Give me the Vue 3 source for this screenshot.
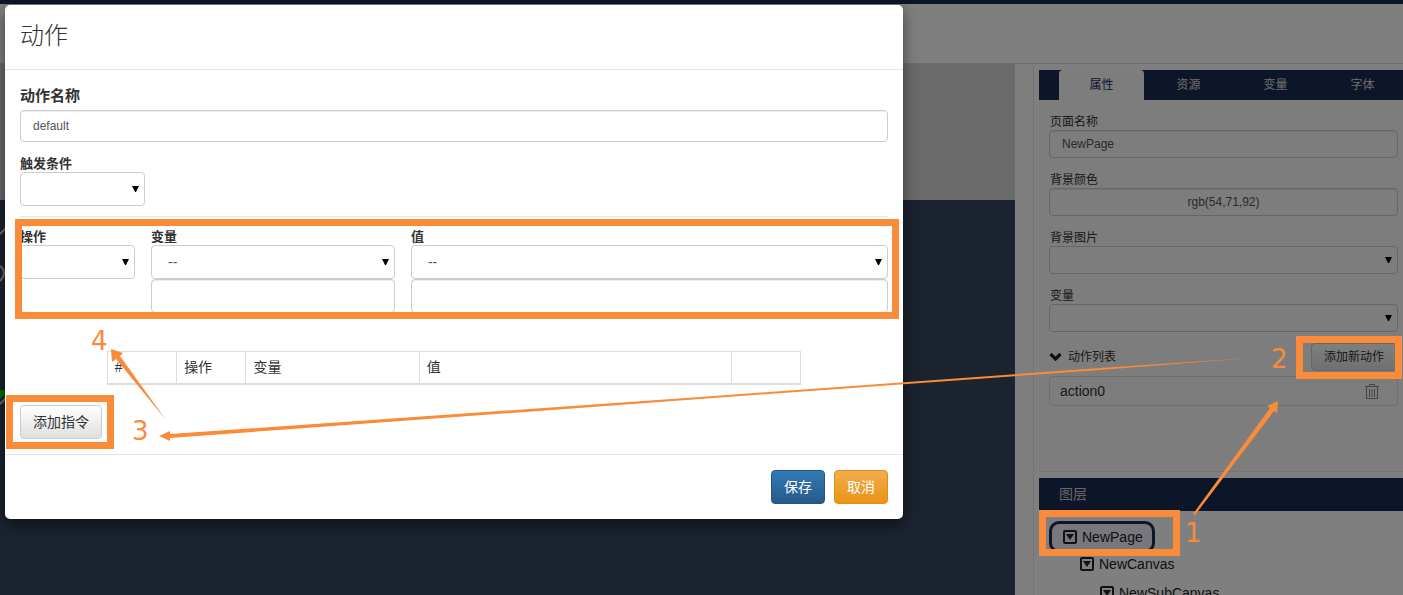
<script setup>
import { ref } from 'vue'

const tabs = ['属性', '资源', '变量', '字体']
const activeTab = ref('属性')
const actionName = ref('default')
const pageName = ref('NewPage')
const background = ref('rgb(54,71,92)')
const layers = [
  { name: 'NewPage', level: 0, selected: true },
  { name: 'NewCanvas', level: 1 },
  { name: 'NewSubCanvas', level: 2 },
]
</script>

<template>
  <div class="app">
    <header class="navbar"></header>
    <div class="toolbar"></div>
    <div class="workspace">
      <main class="stage">
        <div class="stage-canvas">
          <svg class="stage-art" width="6" height="220" viewBox="0 0 6 220" fill="none">
            <path d="M0 34 L6 28 M0 66 C3 68 4 70 4 73 C4 76 3 78 0 81 M0 204 L6 198" stroke="#ddd" stroke-width="2" />
            <path d="M0 190h5v5l-5 4z" fill="#00e000" />
          </svg>
        </div>
      </main>
      <aside class="sidebar">
        <section class="panel properties">
          <nav class="tabs">
            <button v-for="t in tabs" :key="t" type="button" class="tab" :class="{ active: t === activeTab }" @click="activeTab = t">{{ t }}</button>
          </nav>
          <div class="panel-body">
            <div class="prop">
              <label for="page-name">页面名称</label>
              <input id="page-name" v-model="pageName" type="text" class="control small">
            </div>
            <div class="prop">
              <label for="bg-color">背景颜色</label>
              <input id="bg-color" v-model="background" type="text" class="control small centered">
            </div>
            <div class="prop">
              <label for="bg-image">背景图片</label>
              <div class="select small">
                <select id="bg-image" class="control small"><option></option></select>
                <svg class="caret" width="7" height="6" viewBox="0 0 7 6"><path d="M0 0h7L4 6H3z" /></svg>
              </div>
            </div>
            <div class="prop">
              <label for="page-var">变量</label>
              <div class="select small">
                <select id="page-var" class="control small"><option></option></select>
                <svg class="caret" width="7" height="6" viewBox="0 0 7 6"><path d="M0 0h7L4 6H3z" /></svg>
              </div>
            </div>
            <div class="actions-head">
              <svg width="13" height="10" viewBox="0 0 13 10"><path d="M1.5 2 L6.5 7 L11.5 2" fill="none" stroke="#222" stroke-width="3.2" /></svg>
              <span>动作列表</span>
              <button type="button" class="btn btn-small">添加新动作</button>
            </div>
            <div class="action-item">
              <span>action0</span>
              <button type="button" class="trash" aria-label="Delete">
                <svg width="14" height="17" viewBox="0 0 14 17" fill="none" stroke="#888" stroke-width="1"><path d="M0 3.5h14M4.5 3V1.5h5V3M1.5 4v11.500h11V4M4.500 6v8M7 6v8M9.500 6v8" /></svg>
              </button>
            </div>
          </div>
        </section>
        <section class="panel layers">
          <h2>图层</h2>
          <ul class="tree">
            <li v-for="l in layers" :key="l.name" :class="['level-' + l.level, { selected: l.selected }]">
              <svg width="14" height="14" viewBox="0 0 14 14"><rect x="1" y="1" width="12" height="12" rx="1" fill="none" stroke="currentColor" stroke-width="2" /><path d="M3 4h8L7 10z" fill="currentColor" /></svg>
              <span>{{ l.name }}</span>
            </li>
          </ul>
        </section>
      </aside>
    </div>

    <div class="backdrop"></div>

    <div class="modal" role="dialog" aria-labelledby="modal-title">
      <div class="modal-header"><h1 id="modal-title">动作</h1></div>
      <div class="modal-body">
        <label class="name-label" for="action-name">动作名称</label>
        <input id="action-name" v-model="actionName" type="text" class="control name-input">
        <label class="field-label" for="trigger">触发条件</label>
        <div class="select trigger">
          <select id="trigger" class="control"><option></option></select>
          <svg class="caret" width="7" height="6" viewBox="0 0 7 6"><path d="M0 0h7L4 6H3z" /></svg>
        </div>
        <hr>
        <div class="command">
          <div>
            <label class="field-label" for="op">操作</label>
            <div class="select">
              <select id="op" class="control"><option></option></select>
              <svg class="caret" width="7" height="6" viewBox="0 0 7 6"><path d="M0 0h7L4 6H3z" /></svg>
            </div>
          </div>
          <div>
            <label class="field-label" for="var">变量</label>
            <div class="select">
              <select id="var" class="control"><option>--</option></select>
              <svg class="caret" width="7" height="6" viewBox="0 0 7 6"><path d="M0 0h7L4 6H3z" /></svg>
            </div>
            <input type="text" class="control" aria-label="变量">
          </div>
          <div>
            <label class="field-label" for="val">值</label>
            <div class="select">
              <select id="val" class="control"><option>--</option></select>
              <svg class="caret" width="7" height="6" viewBox="0 0 7 6"><path d="M0 0h7L4 6H3z" /></svg>
            </div>
            <input type="text" class="control" aria-label="值">
          </div>
        </div>
        <table>
          <thead>
            <tr><th class="narrow">#</th><th class="narrow">操作</th><th class="mid">变量</th><th>值</th><th class="narrow"></th></tr>
          </thead>
        </table>
        <button type="button" class="btn">添加指令</button>
      </div>
      <div class="modal-footer">
        <button type="button" class="btn primary">保存</button>
        <button type="button" class="btn warning">取消</button>
      </div>
    </div>

    <div class="mark mark-command"></div>
    <div class="mark mark-add"></div>
    <div class="mark mark-action"></div>
    <div class="mark mark-page"></div>
    <svg class="arrows" width="1403" height="595" viewBox="0 0 1403 595">
      <path d="M159 436 L170 431 L170 434 L700 397 L1100 368 L1250 358 L1100 370 L700 399 L170 438 L170 441z" />
      <path d="M111 349 L123 353 L120 356 L166 420 L116 359 L112 362z" />
      <path d="M1278 401 L1277 413 L1274 411 L1195 515 L1193 514 L1270 408 L1267 406z" />
      <text x="1185" y="542">1</text>
      <text x="1271" y="368">2</text>
      <text x="132" y="440">3</text>
      <text x="91" y="350">4</text>
    </svg>
  </div>
</template>

<style>
body { margin: 0; overflow: hidden; }
</style>

<style scoped>
* { box-sizing: border-box; }
.app {
  position: relative;
  display: flex;
  flex-direction: column;
  height: 100vh;
  overflow: hidden;
  background: #fff;
  color: #333;
  font: 14px/20px "Liberation Sans", "Noto Sans CJK SC", sans-serif;
}
.navbar { flex: none; height: 4px; background: #1a2a50; }
.toolbar { flex: none; height: 60px; border-bottom: 1px solid #ddd; }
.workspace { flex: 1; min-height: 0; display: flex; gap: 18px; }
.stage { flex: 1; min-width: 0; display: flex; padding-top: 136px; background: #d6d6d6; }
.stage-canvas { flex: 1; background: #36475c; }
.stage-art { display: block; }
.sidebar { flex: none; width: 370px; display: flex; flex-direction: column; border-left: 1px solid #e6e6e6; padding-left: 5px; }
.properties { flex: none; height: 408px; padding-top: 6px; border-bottom: 1px solid #e6e6e6; }
.tabs { display: flex; height: 30px; padding-left: 20px; background: #1a2a50; }
.tab { flex: none; width: 87px; padding: 0 2px 0 0; border: 0; background: none; color: #ddd; font: inherit; font-size: 12px; }
.tab.active { width: 85px; margin-right: 2px; padding: 0; border-radius: 4px 4px 0 0; background: #fafafa; color: #1a2a50; }
.panel-body { height: 371px; padding: 10px 5px 0 10px; background: #fafafa; }
.prop { height: 58px; }
.prop label { display: block; height: 20px; padding-left: 1px; font-size: 12px; line-height: 24px; }

.control {
  display: block;
  width: 100%;
  height: 34px;
  margin: 0;
  padding: 0 12px;
  border: 1px solid #ccc;
  border-radius: 4px;
  background: #fff;
  color: #555;
  font: inherit;
  font-size: 12px;
  box-shadow: inset 0 1px 1px rgba(0, 0, 0, .075);
}
select.control { appearance: none; padding-left: 16px; font-size: 14px; box-shadow: none; }
.control.small { height: 28px; background: transparent; font-size: 12px; }
.centered { text-align: center; }
.select { position: relative; }
.caret { position: absolute; right: 6px; top: 14px; fill: #000; pointer-events: none; }
.select.small .caret { top: 11px; }

.actions-head { display: flex; align-items: center; height: 30px; font-size: 12px; }
.actions-head span { flex: 1; padding-left: 6px; }
.btn {
  height: 34px;
  padding: 0 12px;
  border: 1px solid #ccc;
  border-radius: 4px;
  background: linear-gradient(#fff, #e0e0e0);
  color: #333;
  font: inherit;
}
.btn-small { height: 28px; margin-right: 1px; font-size: 12px; }
.action-item { display: flex; align-items: center; justify-content: space-between; height: 30px; margin-top: 4px; padding: 0 18px 0 10px; border: 1px solid #ddd; border-radius: 4px; }
.trash { display: flex; padding: 0; border: 0; background: none; }

.layers { margin-top: 6px; }
.layers h2 { height: 33px; margin: 0; padding-left: 20px; background: #1a2a50; color: #ccc; font-size: 14px; font-weight: 400; line-height: 32px; }
.tree { margin: 0; padding: 10px 0 0 10px; list-style: none; color: #222; }
.tree li { display: flex; align-items: center; gap: 5px; width: max-content; height: 29px; }
.tree li.level-0 { height: 32px; padding: 0 9px 0 11px; }
.tree li.level-1 { margin-left: 31px; height: 22px; }
.tree li.level-2 { margin-left: 51px; height: 36px; }
.tree li.selected { border: 3px solid #1a2a50; border-radius: 10px; background: #eeeefa; }

.backdrop { position: absolute; inset: 0; background: rgba(0, 0, 0, .5); }
.modal {
  position: absolute;
  left: 5px;
  top: 5px;
  width: 64%;
  border-radius: 5px;
  background: #fff;
  box-shadow: 0 5px 15px rgba(0, 0, 0, .5);
}
.modal-header { padding: 16px 15px 18px; border-bottom: 1px solid #e5e5e5; }
.modal-header h1 { margin: 0; font-size: 24px; font-weight: 300; line-height: 30px; }
.modal-body { padding: 15px; }
.name-label { display: block; height: 25px; font-size: 15px; font-weight: 700; line-height: 22px; }
.name-input { height: 32px; margin-bottom: 12px; }
.field-label { display: block; height: 18px; font-size: 13px; font-weight: 700; }
.trigger { width: 125px; }
hr { height: 1px; margin: 10px 0; border: 0; background: #dde5ee; }
.command { display: grid; grid-template-columns: 115fr 244fr 477fr; gap: 16px; }
table { width: 80%; margin: 38px auto 20px; border-collapse: collapse; table-layout: fixed; }
th { height: 32px; padding: 0 7px; border: 1px solid #ddd; border-bottom-width: 2px; font-weight: 400; text-align: left; }
.narrow { width: 10%; }
.mid { width: 25%; }
.modal-footer { display: flex; justify-content: flex-end; gap: 9px; padding: 15px; border-top: 1px solid #e5e5e5; }
.primary { border-color: #245580; background: linear-gradient(#337ab7, #265a88); color: #fff; }
.warning { border-color: #e38d13; background: linear-gradient(#f0ad4e, #eb9316); color: #fff; }

.mark { position: absolute; border: 7px solid #f98b3a; pointer-events: none; }
.mark-command { left: 15px; top: 219px; width: 884px; height: 100px; }
.mark-add { left: 6px; top: 395px; width: 108px; height: 54px; }
.mark-action { right: 1px; top: 336px; width: 106px; height: 43px; }
.mark-page { right: 223px; top: 510px; width: 141px; height: 46px; }
.arrows { position: absolute; left: 0; top: 0; fill: #f98b3a; pointer-events: none; }
.arrows text { font: 26px "DejaVu Sans", sans-serif; }
</style>
